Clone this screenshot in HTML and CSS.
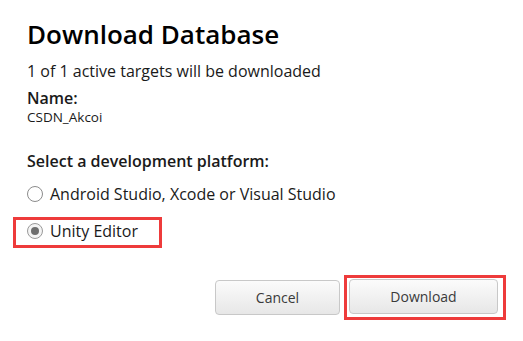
FILE: index.html
```html
<!DOCTYPE html>
<html>
<head>
<meta charset="utf-8">
<link rel="stylesheet" href="styles.css">
</head>
<body>
<div class="dialog">
  <h1 class="title">Download Database</h1>
  <p class="summary">1 of 1 active targets will be downloaded</p>
  <div class="name-label">Name:</div>
  <div class="name-value">CSDN_Akcoi</div>
  <div class="platform-label">Select a development platform:</div>
  <label class="option option-plain"><span class="radio"></span><span class="option-text">Android Studio, Xcode or Visual Studio</span></label>
  <label class="option option-marked"><span class="radio radio-checked"></span><span class="option-text">Unity Editor</span></label>
  <div class="actions">
    <button class="btn btn-cancel">Cancel</button>
    <div class="highlight-btn"><button class="btn btn-download">Download</button></div>
  </div>
</div>
</body>
</html>
```
FILE: styles.css
```css
html, body {
  margin: 0;
  padding: 0;
  background: #ffffff;
}
body {
  font-family: "Open Sans", "DejaVu Sans", sans-serif;
  color: #1a1a1a;
}
.dialog {
  width: 523px;
  height: 341px;
  box-sizing: border-box;
  padding: 16px 0 0 27px;
  display: flex;
  flex-direction: column;
  align-items: flex-start;
}
.title {
  margin: 0;
  font-size: 26px;
  font-weight: 600;
  line-height: 36px;
  color: #000;
}
.summary {
  margin: 8px 0 0 0;
  font-size: 16px;
  line-height: 22px;
}
.name-label {
  margin-top: 6px;
  font-size: 16px;
  font-weight: 600;
  line-height: 20px;
}
.name-value {
  font-size: 13.5px;
  line-height: 18px;
}
.platform-label {
  margin-top: 24px;
  font-size: 16px;
  font-weight: 600;
  line-height: 22px;
}
.option {
  display: flex;
  align-items: center;
  gap: 7px;
  font-size: 16px;
  line-height: 22px;
}
.option-plain {
  margin-top: 11px;
}
.option-marked {
  margin-top: 12px;
  margin-left: -14px;
  padding: 0 21px 3px 11px;
  border: 3px solid #ee3b3b;
}
.radio {
  width: 14px;
  height: 14px;
  border: 1px solid #8c8c8c;
  border-radius: 50%;
  background: #fff;
  box-sizing: content-box;
  position: relative;
  flex: none;
}
.radio-checked {
  border-color: #9a9a9a;
  background: #f4f4f4;
}
.radio-checked::after {
  content: "";
  position: absolute;
  left: 3px;
  top: 3px;
  width: 8px;
  height: 8px;
  border-radius: 50%;
  background: #6e6e6e;
}
.actions {
  align-self: stretch;
  display: flex;
  justify-content: flex-end;
  align-items: center;
  gap: 4px;
  margin-top: 27px;
  padding-right: 17px;
}
.btn {
  font-family: "Open Sans", "DejaVu Sans", sans-serif;
  font-size: 14px;
  color: #3a3a3a;
  height: 35px;
  padding: 0;
  border: 1px solid #c8c8c8;
  border-radius: 4px;
  background: linear-gradient(#fbfbfb, #e7e7e7);
}
.btn-cancel {
  width: 125px;
}
.highlight-btn {
  border: 3px solid #ee3b3b;
  padding: 1px 5px 3px 2px;
}
.btn-download {
  width: 149px;
  display: block;
}
```
